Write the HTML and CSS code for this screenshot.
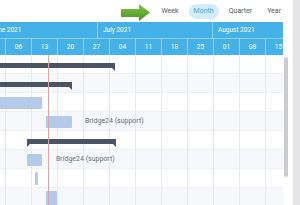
FILE: index.html
```html
<!DOCTYPE html>
<html>
<head>
<meta charset="utf-8">
<link rel="stylesheet" href="styles.css">
</head>
<body>
<div class="app">
  <div class="content">
    <div class="toolbar">
      <svg class="arrow" viewBox="0 0 30 17" width="30" height="17">
        <defs>
          <linearGradient id="g" x1="0" y1="0" x2="0" y2="1">
            <stop offset="0" stop-color="#86c84a"/>
            <stop offset="1" stop-color="#4a9222"/>
          </linearGradient>
        </defs>
        <polygon points="0,5 18,5 18,0 29,8.5 18,17 18,13 0,13" fill="url(#g)"/>
      </svg>
      <span class="tab first">Week</span>
      <span class="tab active">Month</span>
      <span class="tab">Quarter</span>
      <span class="tab">Year</span>
    </div>
    <div class="main">
      <div class="chart">
        <div class="months">
          <div class="month" style="width:112px">June 2021</div>
          <div class="month" style="width:115px">July 2021</div>
          <div class="month" style="width:115px">August 2021</div>
        </div>
        <div class="weeks">
          <div class="week">30</div>
          <div class="week">06</div>
          <div class="week">13</div>
          <div class="week">20</div>
          <div class="week">27</div>
          <div class="week">04</div>
          <div class="week">11</div>
          <div class="week">18</div>
          <div class="week">25</div>
          <div class="week">01</div>
          <div class="week">08</div>
          <div class="week">15</div>
        </div>
        <div class="rows">
          <div class="row"><div class="summary tip-r" style="left:-5px;width:120px"></div></div>
          <div class="row"><div class="summary tip-r" style="left:-5px;width:77px"></div></div>
          <div class="row"><div class="task" style="left:-5px;width:47px"></div></div>
          <div class="row"><div class="task" style="left:46px;width:26px"></div><span class="label" style="left:85px">Bridge24 (support)</span></div>
          <div class="row"><div class="summary tip-l tip-r" style="left:27px;width:89px"></div></div>
          <div class="row"><div class="task" style="left:27px;width:15px"></div><span class="label" style="left:56px">Bridge24 (support)</span></div>
          <div class="row"><div class="task thin" style="left:35px;width:3px"></div></div>
          <div class="row"><div class="task last" style="left:46px;width:11px"></div></div>
          <div class="today" style="left:48px"></div>
        </div>
      </div>
      <div class="scroll"><div class="thumb"></div></div>
    </div>
  </div>
  <div class="edge"></div>
</div>
</body>
</html>
```

FILE: styles.css
```css
* { box-sizing: border-box; }
html, body { margin: 0; padding: 0; background: #fff; }
body { font-family: Roboto, "Liberation Sans", sans-serif; width: 300px; height: 205px; overflow: hidden; }

.app { display: flex; width: 300px; height: 205px; }
.content { width: 293px; display: flex; flex-direction: column; }
.edge { width: 7px; background: #e5e5e8; }

.toolbar { height: 22px; display: flex; align-items: center; gap: 5px; padding-left: 121px; padding-right: 7px; }
.arrow { align-self: flex-start; margin-top: 4px; flex: none; }
.tab { flex: none; font-size: 7px; color: #555a60; padding: 0 5px; height: 15px; line-height: 15px; border-radius: 8px; white-space: nowrap; }
.tab.first { margin-left: auto; }
.tab.active { background: #d3ecfa; color: #3ea9e4; }

.main { flex: 1; display: flex; min-height: 0; }
.chart { width: 283px; overflow: hidden; position: relative; display: flex; flex-direction: column; }
.scroll { width: 10px; padding-top: 35px; padding-left: 1px; }
.thumb { width: 4px; height: 120px; border-radius: 2px; background: #cbcbcf; }

.months { display: flex; height: 17px; background: #45b1e9; border-bottom: 1px solid #8fd0f3; margin-left: -14px; flex: none; }
.month { flex: none; color: #fff; font-size: 6.5px; line-height: 16px; padding-left: 5px; border-right: 1px solid #8fd0f3; white-space: nowrap; }

.weeks { display: flex; height: 16px; background: #45b1e9; margin-left: -20px; flex: none; }
.week { flex: none; width: 26px; border-right: 1px solid #8fd0f3; color: #fff; font-size: 6.5px; line-height: 16px; text-align: center; }

.rows { position: relative; flex: 1; }
.row { position: relative; height: 19px; border-bottom: 1px solid #eef0f4; background-color: #fff;
  background-image: repeating-linear-gradient(90deg, #e7e9ee 0 1px, transparent 1px 26px);
  background-position: 5px 0; }
.row:nth-child(even) { background-color: #f7f8fb; }

.summary { position: absolute; top: 8px; height: 5px; background: #4a5463; }
.tip-r::after { content: ""; position: absolute; right: 0; top: 5px; border-top: 3px solid #4a5463; border-left: 3px solid transparent; }
.tip-l::before { content: ""; position: absolute; left: 0; top: 5px; border-top: 3px solid #4a5463; border-right: 3px solid transparent; }

.task { position: absolute; top: 4px; height: 12px; background: #b5caeb; border-radius: 1px; }
.task.thin { top: 3px; height: 13px; }
.task.last { top: 3px; height: 16px; }
.label { position: absolute; top: 0; line-height: 19px; font-size: 7px; color: #6b6f75; white-space: nowrap; }

.today { position: absolute; top: 0; bottom: 0; width: 1px; background: #f29a9a; z-index: 2; }
```
